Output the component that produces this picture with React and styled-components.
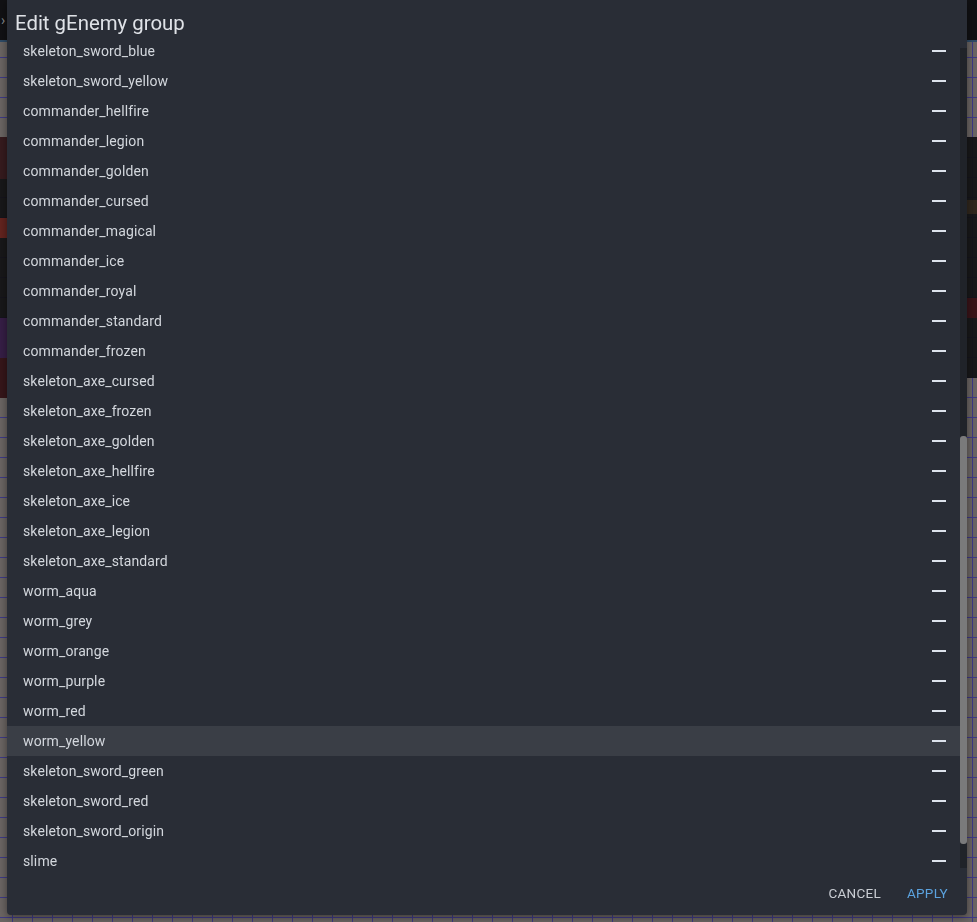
import React, { useLayoutEffect, useRef } from 'react';
import styled, { createGlobalStyle } from 'styled-components';

const GlobalStyle = createGlobalStyle`
  html, body {
    margin: 0;
    padding: 0;
    overflow: hidden;
    background: #6b6563;
    font-family: Roboto, "Liberation Sans", sans-serif;
  }
`;

const Backdrop = styled.div`
  position: fixed;
  inset: 0;
  background-color: #6b6563;
  background-image:
    linear-gradient(to right, #3e3986 1px, transparent 1px),
    linear-gradient(to bottom, #3e3986 1px, transparent 1px);
  background-size: 20px 20px;
  background-position: 12px 17px;
`;

// map tiles on the editor canvas behind the dialog
const Tile = styled.div`
  position: absolute;
  left: ${(p) => p.x}px;
  top: ${(p) => p.y}px;
  width: ${(p) => p.w}px;
  height: ${(p) => p.h}px;
  background: ${(p) => p.color};
  opacity: ${(p) => p.fade || 0.92};
`;

const TopBar = styled.div`
  position: absolute;
  left: 0;
  right: 0;
  top: 0;
  height: 40px;
  background: #111114;
  border-bottom: 2px solid #2f4b66;
  color: #8a8d92;
  font-size: 14px;
  display: flex;
  align-items: center;
  padding-left: 1px;
`;

const Dialog = styled.div`
  position: absolute;
  left: 7px;
  top: 0;
  width: 960px;
  height: 915px;
  display: flex;
  flex-direction: column;
  background: #292d36;
  border-radius: 0 0 4px 4px;
  box-shadow: 0 2px 8px rgba(0, 0, 0, 0.45);
`;

const Title = styled.h2`
  margin: 0;
  height: 44px;
  flex-shrink: 0;
  box-sizing: border-box;
  padding: 11px 8px 0;
  font-size: 20.4px;
  font-weight: 400;
  color: #dfe2e7;
  line-height: 24px;
`;

const ListArea = styled.div`
  flex: 1;
  min-height: 0;
  display: flex;
`;

const List = styled.ul`
  flex: 1;
  margin: 0;
  padding: 0 0 8px;
  list-style: none;
  overflow: hidden;
`;

const ScrollTrack = styled.div`
  position: relative;
  width: 7px;
  margin: 4px 0;
  background: #202329;
`;

const ScrollThumb = styled.div`
  position: absolute;
  left: 0;
  right: 0;
  background: #7a7a7b;
  border-radius: 3px;
`;

const Row = styled.li`
  height: 30px;
  display: flex;
  align-items: center;
  justify-content: space-between;
  padding: 0 9px 0 16px;
  background: ${(p) => (p.selected ? '#3a3e46' : 'transparent')};
  color: #d3d7dd;
  font-size: 14px;
  letter-spacing: 0.12px;
`;

const RemoveButton = styled.button`
  width: 24px;
  height: 24px;
  padding: 0;
  border: 0;
  background: none;
  color: #dde3ec;
  display: flex;
  align-items: center;
  justify-content: center;
`;

const Footer = styled.div`
  height: 43px;
  flex-shrink: 0;
  box-sizing: border-box;
  display: flex;
  align-items: center;
  justify-content: flex-end;
  gap: 10px;
  padding: 0 11px 2px;
`;

const TextButton = styled.button`
  border: 0;
  background: none;
  padding: 6px 8px;
  font-family: Roboto, "Liberation Sans", sans-serif;
  font-size: 13.5px;
  font-weight: 400;
  letter-spacing: 0.02em;
  text-transform: uppercase;
  color: ${(p) => (p.primary ? '#5ba2de' : '#c9cdd3')};
`;

const MinusIcon = () => (
  <svg width="24" height="24" viewBox="0 0 24 24" fill="currentColor">
    <path d="M19 13H5v-2h14v2z" />
  </svg>
);

const enemies = [
  'skeleton_sword_blue', 'skeleton_sword_yellow', 'commander_hellfire',
  'commander_legion', 'commander_golden', 'commander_cursed', 'commander_magical',
  'commander_ice', 'commander_royal', 'commander_standard', 'commander_frozen',
  'skeleton_axe_cursed', 'skeleton_axe_frozen', 'skeleton_axe_golden',
  'skeleton_axe_hellfire', 'skeleton_axe_ice', 'skeleton_axe_legion',
  'skeleton_axe_standard', 'worm_aqua', 'worm_grey', 'worm_orange', 'worm_purple',
  'worm_red', 'worm_yellow', 'skeleton_sword_green', 'skeleton_sword_red',
  'skeleton_sword_origin', 'slime',
];

// the group holds more entries above the ones shown; scrollbar reflects that
const ROW = 30;
const ROWS_ABOVE = 26;
const ROWS_TOTAL = 55;
const VIEW = 828;
const TRACK = VIEW - 8;
const CONTENT = ROWS_TOTAL * ROW + 16;
const OFFSET = 8;
const SCROLL = ROWS_ABOVE * ROW + OFFSET;

export default function App() {
  const listRef = useRef(null);

  useLayoutEffect(() => {
    if (listRef.current) listRef.current.scrollTop = OFFSET;
  }, []);

  const thumbHeight = Math.round((VIEW / CONTENT) * TRACK);
  const thumbTop = Math.round((SCROLL / CONTENT) * TRACK);

  return (
    <>
      <GlobalStyle />
      <Backdrop>
        <Tile x={0} y={137} w={977} h={241} color="#111114" />
        <Tile x={0} y={378} w={7} h={20} color="#111114" />
        <Tile x={0} y={137} w={7} h={42} color="#3a1c1e" />
        <Tile x={0} y={218} w={7} h={20} color="#6a2620" />
        <Tile x={0} y={318} w={7} h={40} color="#3a1f4a" />
        <Tile x={0} y={358} w={7} h={40} color="#3a171a" />
        <Tile x={967} y={298} w={10} h={20} color="#3e1518" />
        <Tile x={967} y={200} w={10} h={14} color="#4a3520" fade={0.5} />
        <TopBar>›</TopBar>
      </Backdrop>
      <Dialog>
        <Title>Edit gEnemy group</Title>
        <ListArea>
          <List ref={listRef}>
            {enemies.map((name) => (
              <Row key={name} selected={name === 'worm_yellow'}>
                {name}
                <RemoveButton aria-label={`remove ${name}`}>
                  <MinusIcon />
                </RemoveButton>
              </Row>
            ))}
          </List>
          <ScrollTrack>
            <ScrollThumb style={{ top: thumbTop, height: thumbHeight }} />
          </ScrollTrack>
        </ListArea>
        <Footer>
          <TextButton>Cancel</TextButton>
          <TextButton primary>Apply</TextButton>
        </Footer>
      </Dialog>
    </>
  );
}
